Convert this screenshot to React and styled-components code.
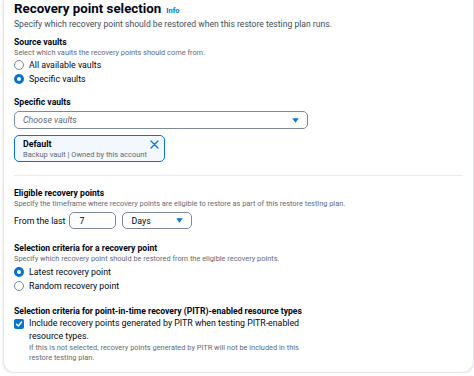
import React from "react";
import styled, { createGlobalStyle } from "styled-components";

const GlobalStyle = createGlobalStyle`
  html, body {
    margin: 0;
    padding: 0;
    background: #ffffff;
  }
  body {
    font-family: Roboto, "Noto Sans", sans-serif;
    color: #000716;
  }
`;

const Card = styled.div`
  box-sizing: border-box;
  width: 471px;
  height: 373px;
  margin-left: 3px;
  border: 1px solid #e3e6e9;
  border-top: none;
  border-radius: 0 0 12px 12px;
  box-shadow: 0 1px 3px rgba(0, 7, 22, 0.12);
  padding: 1px 10px 0 10px;
  display: flex;
  flex-direction: column;
`;

const TitleRow = styled.div`
  display: flex;
  align-items: baseline;
  gap: 5px;
`;

const Title = styled.h2`
  margin: 0;
  font-size: 13.3px;
  line-height: 16px;
  font-weight: 700;
`;

const InfoLink = styled.a`
  font-size: 7.5px;
  font-weight: 700;
  color: #0972d3;
`;

const Subtitle = styled.div`
  margin-top: 1px;
  font-size: 8.6px;
  line-height: 12px;
  color: #414d5c;
`;

const Section = styled.div`
  display: flex;
  flex-direction: column;
  margin-top: ${(p) => p.$top || 0}px;
`;

const Label = styled.div`
  font-size: 8.6px;
  line-height: 12px;
  font-weight: 700;
`;

const Hint = styled.div`
  font-size: 7.4px;
  line-height: 10px;
  color: #5f6b7a;
`;

const RadioRow = styled.label`
  display: flex;
  align-items: center;
  gap: 5px;
  height: 14px;
  font-size: 8.8px;
  margin-top: ${(p) => p.$top || 0}px;
`;

const RadioDot = styled.span`
  box-sizing: border-box;
  width: 10px;
  height: 10px;
  border-radius: 50%;
  border: ${(p) => (p.$checked ? "3px solid #0972d3" : "1px solid #7d8998")};
  background: #fff;
`;

const Select = styled.div`
  box-sizing: border-box;
  display: flex;
  align-items: center;
  justify-content: space-between;
  width: ${(p) => p.$width}px;
  height: ${(p) => p.$height || 18}px;
  margin-top: ${(p) => p.$top || 0}px;
  border: 1px solid #7d8998;
  border-radius: 5px;
  padding: 0 8px 0 8px;
  font-size: 8.8px;
  color: ${(p) => (p.$placeholder ? "#5f6b7a" : "#000716")};
  font-style: ${(p) => (p.$placeholder ? "italic" : "normal")};
`;

const Caret = () => (
  <svg width="7" height="5" viewBox="0 0 7 5">
    <path d="M0.3 0.3 H6.7 L3.5 4.7 Z" fill="#0972d3" />
  </svg>
);

const Token = styled.div`
  box-sizing: border-box;
  position: relative;
  width: 151px;
  height: 27px;
  margin-top: 6px;
  border: 1px solid #0972d3;
  border-radius: 5px;
  background: #f2f8fd;
  padding: 2px 8px 0 8px;
  display: flex;
  flex-direction: column;
`;

const TokenName = styled.div`
  font-size: 8.8px;
  line-height: 12px;
  font-weight: 700;
`;

const TokenMeta = styled.div`
  font-size: 7.5px;
  line-height: 10px;
  color: #5f6b7a;
  white-space: nowrap;
`;

const Dismiss = styled.span`
  position: absolute;
  right: 5px;
  top: 4px;
  display: flex;
`;

const Divider = styled.hr`
  margin: 13px 0 0 0;
  width: 449px;
  border: none;
  border-top: 1px solid #e9ebed;
`;

const InlineRow = styled.div`
  display: flex;
  align-items: center;
  gap: 4px;
  margin-top: 3px;
  font-size: 8.8px;
`;

const TextInput = styled.div`
  box-sizing: border-box;
  width: 47px;
  height: 17px;
  border: 1px solid #7d8998;
  border-radius: 5px;
  padding-left: 9px;
  font-size: 8.8px;
  display: flex;
  align-items: center;
`;

const DaysSelect = styled(Select)`
  margin-left: 2px;
`;

const CheckRow = styled.div`
  display: flex;
  gap: 5px;
`;

const CheckBox = styled.span`
  box-sizing: border-box;
  flex: none;
  width: 10px;
  height: 10px;
  margin-top: 2px;
  border-radius: 2px;
  background: #0972d3;
  display: flex;
  align-items: center;
  justify-content: center;
`;

const CheckText = styled.div`
  display: flex;
  flex-direction: column;
  width: 275px;
`;

const CheckLabel = styled.div`
  font-size: 8.8px;
  line-height: 13px;
`;

export default function App() {
  return (
    <>
      <GlobalStyle />
      <Card>
        <div>
          <TitleRow>
            <Title>Recovery point selection</Title>
            <InfoLink>Info</InfoLink>
          </TitleRow>
          <Subtitle>
            Specify which recovery point should be restored when this restore testing plan runs.
          </Subtitle>
        </div>

        <Section $top={6}>
          <Label>Source vaults</Label>
          <Hint>Select which vaults the recovery points should come from.</Hint>
          <RadioRow>
            <RadioDot />
            All available vaults
          </RadioRow>
          <RadioRow>
            <RadioDot $checked />
            Specific vaults
          </RadioRow>
        </Section>

        <Section $top={10}>
          <Label>Specific vaults</Label>
          <Select $width={294} $top={3} $placeholder>
            Choose vaults
            <Caret />
          </Select>
          <Token>
            <TokenName>Default</TokenName>
            <TokenMeta>Backup vault | Owned by this account</TokenMeta>
            <Dismiss>
              <svg width="9" height="9" viewBox="0 0 9 9">
                <path d="M1 1 L8 8 M8 1 L1 8" stroke="#0972d3" strokeWidth="1.3" strokeLinecap="round" />
              </svg>
            </Dismiss>
          </Token>
        </Section>

        <Divider />

        <Section $top={11}>
          <Label>Eligible recovery points</Label>
          <Hint>
            Specify the timeframe where recovery points are eligible to restore as part of this restore testing plan.
          </Hint>
          <InlineRow>
            From the last
            <TextInput>7</TextInput>
            <DaysSelect $width={70} $height={17}>
              Days
              <Caret />
            </DaysSelect>
          </InlineRow>
        </Section>

        <Section $top={13}>
          <Label>Selection criteria for a recovery point</Label>
          <Hint>Specify which recovery point should be restored from the eligible recovery points.</Hint>
          <RadioRow $top={1}>
            <RadioDot $checked />
            Latest recovery point
          </RadioRow>
          <RadioRow>
            <RadioDot />
            Random recovery point
          </RadioRow>
        </Section>

        <Section $top={12}>
          <Label>Selection criteria for point-in-time recovery (PITR)-enabled resource types</Label>
          <CheckRow>
            <CheckBox>
              <svg width="8" height="8" viewBox="0 0 8 8">
                <path d="M1.5 4.2 L3.3 6 L6.6 2" stroke="#fff" strokeWidth="1.4" fill="none" strokeLinecap="round" strokeLinejoin="round" />
              </svg>
            </CheckBox>
            <CheckText>
              <CheckLabel>Include recovery points generated by PITR when testing PITR-enabled resource types.</CheckLabel>
              <Hint>
                If this is not selected, recovery points generated by PITR will not be included in this restore testing plan.
              </Hint>
            </CheckText>
          </CheckRow>
        </Section>
      </Card>
    </>
  );
}
